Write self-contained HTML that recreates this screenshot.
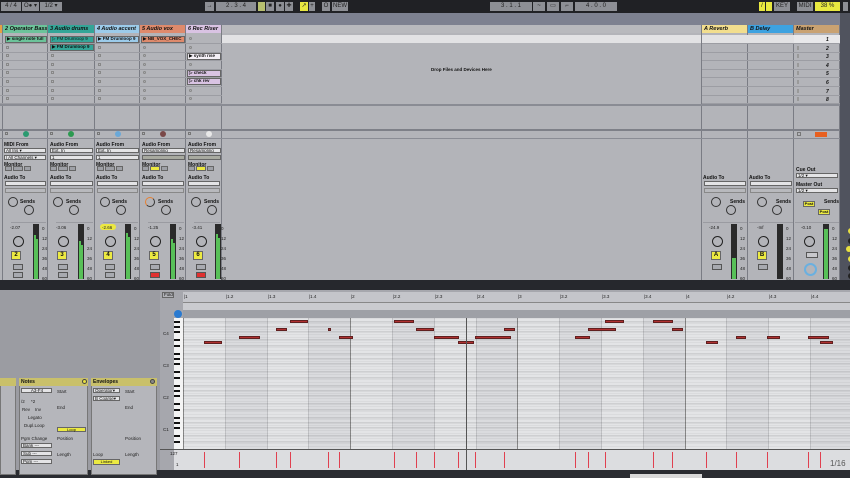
<!DOCTYPE html>
<html><head><meta charset="utf-8">
<style>
*{margin:0;padding:0;box-sizing:border-box}
body{width:850px;height:478px;overflow:hidden;background:#25272c;font-family:"Liberation Sans",sans-serif;font-size:5px;color:#111;position:relative}
.a{position:absolute}
.b{position:absolute;font-weight:bold}
.fld{position:absolute;background:#e4e4e6;border:1px solid #666;font-size:4.5px;line-height:4px;padding-left:1px;overflow:hidden;white-space:nowrap}
.tb{position:absolute;background:#8d8f95;color:#222;font-size:6px;line-height:9px;text-align:center;top:2px;height:9px}
.hd{position:absolute;top:25px;height:8px;font-style:italic;font-weight:bold;font-size:5.5px;line-height:8px;padding-left:2px;white-space:nowrap;overflow:hidden}
.yb{position:absolute;background:#ecea42;border:1px solid #666;font-weight:bold;font-size:6px;text-align:center;line-height:7px}
.sm{position:absolute;font-size:4.5px;color:#222}
</style></head><body>
<!-- top bar -->
<div class="a" style="left:0;top:0;width:850px;height:13px;background:#202125"></div>
<div class="tb" style="left:1px;width:20px">4 / 4</div>
<div class="tb" style="left:22px;width:17px">O● ▾</div>
<div class="tb" style="left:40px;width:22px">1/2 ▾</div>
<div class="tb" style="left:205px;width:9px">→</div>
<div class="tb" style="left:216px;width:40px">2 . 3 . 4</div>
<div class="tb" style="left:258px;width:7px;background:#b8c070"></div>
<div class="tb" style="left:266px;width:8px">■</div>
<div class="tb" style="left:276px;width:8px">●</div>
<div class="tb" style="left:285px;width:8px">✚</div>
<div class="tb" style="left:300px;width:8px;background:#e8e840">↗</div>
<div class="tb" style="left:309px;width:6px">+</div>
<div class="tb" style="left:322px;width:8px">O</div>
<div class="tb" style="left:332px;width:16px">NEW</div>
<div class="tb" style="left:490px;width:42px">3 . 1 . 1</div>
<div class="tb" style="left:533px;width:12px">~</div>
<div class="tb" style="left:547px;width:12px">▭</div>
<div class="tb" style="left:561px;width:12px">⌐</div>
<div class="tb" style="left:575px;width:42px">4 . 0 . 0</div>
<div class="tb" style="left:759px;width:6px;background:#e8e840">/</div>
<div class="tb" style="left:766px;width:6px;background:#e8e840"></div>
<div class="tb" style="left:774px;width:16px">KEY</div>
<div class="tb" style="left:797px;width:16px">MIDI</div>
<div class="tb" style="left:815px;width:25px;background:#e8e840">38 %</div>
<div class="tb" style="left:843px;width:5px"></div>
<div class="a" style="left:0;top:13px;width:850px;height:12px;background:#7d8190"></div>
<!-- session -->
<div class="a" style="left:0;top:25px;width:840px;height:255px;background:#b3b4b9"></div>
<div class="a" style="left:840px;top:13px;width:10px;height:267px;background:#50535e"></div>
<div class="a" style="left:222px;top:35px;width:480px;height:8px;background:#e2e2e4"></div>
<div class="b" style="left:431px;top:67px;font-size:4.5px">Drop Files and Devices Here</div>
<div class="a" style="left:222px;top:25px;width:480px;height:8px;background:#b8b9bd"></div>
<div class="hd" style="left:0;width:3px;background:#e8a040"></div>
<div class="hd" style="left:3px;width:45px;background:#6cc39a">2 Operator Bass</div>
<div class="hd" style="left:48px;width:47px;background:#33a597">3 Audio drums</div>
<div class="hd" style="left:95px;width:45px;background:#9ccbea">4 Audio accent</div>
<div class="hd" style="left:140px;width:46px;background:#de8a6c">5 Audio vox</div>
<div class="hd" style="left:186px;width:36px;background:#d9c3e3">6 Rec Riser</div>
<div class="hd" style="left:702px;width:45px;background:#f2de8e">A Reverb</div>
<div class="hd" style="left:748px;width:45px;background:#3da2e0">B Delay</div>
<div class="hd" style="left:794px;width:46px;background:#c9a272">Master</div>
<div id="S"></div>
<!-- clips -->
<div class="fld" style="left:5px;top:36px;width:42px;height:7px;background:#6cc39a;font-weight:bold">▶ single note full</div>
<div class="fld" style="left:50px;top:36px;width:44px;height:7px;background:#33a597">▷ FM Drumloop 9</div>
<div class="fld" style="left:50px;top:44px;width:44px;height:7px;background:#33a597;font-weight:bold">▶ FM Drumloop 9</div>
<div class="fld" style="left:96px;top:36px;width:43px;height:7px;background:#9ccbea;font-weight:bold">▶ FM Drumloop 9</div>
<div class="fld" style="left:141px;top:36px;width:44px;height:7px;background:#de8a6c;font-weight:bold">▶ NB_VOX_CHEC</div>
<div class="fld" style="left:187px;top:53px;width:34px;height:7px;background:#f4f0f6;font-weight:bold">▶ synth rise</div>
<div class="fld" style="left:187px;top:70px;width:34px;height:7px;background:#d9c3e3;font-weight:bold">▷ check</div>
<div class="fld" style="left:187px;top:78px;width:34px;height:7px;background:#d9c3e3;font-weight:bold">▷ chk rev</div>
<!-- I/O text -->
<div class="b" style="left:4px;top:142px">MIDI From</div><div class="fld" style="left:4px;top:148px;width:42px;height:5px">All Ins ▾</div><div class="fld" style="left:4px;top:155px;width:42px;height:5px">| All Channels ▾</div>
<div class="b" style="left:50px;top:142px">Audio From</div><div class="fld" style="left:50px;top:148px;width:43px;height:5px">Ext. In</div><div class="fld" style="left:50px;top:155px;width:43px;height:5px">1</div>
<div class="b" style="left:96px;top:142px">Audio From</div><div class="fld" style="left:96px;top:148px;width:43px;height:5px">Ext. In</div><div class="fld" style="left:96px;top:155px;width:43px;height:5px">1</div>
<div class="b" style="left:142px;top:142px">Audio From</div><div class="fld" style="left:142px;top:148px;width:43px;height:5px">Resampling</div><div class="fld" style="left:142px;top:155px;width:43px;height:5px;background:#a8aaa0"></div>
<div class="b" style="left:188px;top:142px">Audio From</div><div class="fld" style="left:188px;top:148px;width:33px;height:5px">Resampling</div><div class="fld" style="left:188px;top:155px;width:33px;height:5px;background:#a8aaa0"></div>
<div class="b" style="left:4px;top:162px">Monitor</div><div class="b" style="left:50px;top:162px">Monitor</div><div class="b" style="left:96px;top:162px">Monitor</div><div class="b" style="left:142px;top:162px">Monitor</div><div class="b" style="left:188px;top:162px">Monitor</div>
<div class="b" style="left:4px;top:175px">Audio To</div><div class="b" style="left:50px;top:175px">Audio To</div><div class="b" style="left:96px;top:175px">Audio To</div><div class="b" style="left:142px;top:175px">Audio To</div><div class="b" style="left:188px;top:175px">Audio To</div>
<div class="b" style="left:703px;top:175px">Audio To</div><div class="b" style="left:749px;top:175px">Audio To</div>
<div class="b" style="left:796px;top:167px">Cue Out</div><div class="fld" style="left:796px;top:173px;width:42px;height:5px">1/2 ▾</div>
<div class="b" style="left:796px;top:182px">Master Out</div><div class="fld" style="left:796px;top:188px;width:42px;height:5px">1/2 ▾</div>
<div class="yb" style="left:803px;top:201px;width:12px;height:6px;font-size:4px;line-height:4px">Post</div>
<div class="yb" style="left:818px;top:209px;width:12px;height:6px;font-size:4px;line-height:4px">Post</div>
<!-- mixer texts -->
<div class="sm" style="left:10px;top:225px">-2.07</div><div class="sm" style="left:56px;top:225px">-3.06</div>
<div class="a" style="left:100px;top:224px;width:16px;height:6px;background:#ece840;border-radius:3px"></div><div class="sm" style="left:102px;top:225px">-2.66</div>
<div class="sm" style="left:148px;top:225px">-1.25</div><div class="sm" style="left:192px;top:225px">-3.41</div>
<div class="sm" style="left:709px;top:225px">-24.9</div><div class="sm" style="left:757px;top:225px">-Inf</div><div class="sm" style="left:801px;top:225px">-0.10</div>
<div class="yb" style="left:11px;top:251px;width:10px;height:9px">2</div>
<div class="yb" style="left:57px;top:251px;width:10px;height:9px">3</div>
<div class="yb" style="left:103px;top:251px;width:10px;height:9px">4</div>
<div class="yb" style="left:149px;top:251px;width:10px;height:9px">5</div>
<div class="yb" style="left:193px;top:251px;width:10px;height:9px">6</div>
<div class="yb" style="left:711px;top:251px;width:10px;height:9px">A</div>
<div class="yb" style="left:757px;top:251px;width:10px;height:9px">B</div>
<div class="b" style="left:730px;top:199px">Sends</div><div class="b" style="left:776px;top:199px">Sends</div><div class="b" style="left:824px;top:199px">Sends</div>
<div class="b" style="left:20px;top:199px">Sends</div><div class="b" style="left:66px;top:199px">Sends</div><div class="b" style="left:112px;top:199px">Sends</div><div class="b" style="left:158px;top:199px">Sends</div><div class="b" style="left:204px;top:199px">Sends</div>
<!-- bottom -->
<div class="a" style="left:0;top:280px;width:850px;height:10px;background:#26282d"></div>
<div class="a" style="left:0;top:290px;width:160px;height:180px;background:#9b9ca2"></div>
<div class="a" style="left:160px;top:290px;width:690px;height:180px;background:#a6a7ad"></div>
<div class="a" style="left:0;top:470px;width:850px;height:8px;background:#2a2c31"></div>
<div class="a" style="left:630px;top:474px;width:72px;height:4px;background:#d8d8d8"></div>
<div id="P"></div>
<div class="fld" style="left:162px;top:292px;width:12px;height:6px;background:#b0b1b6;font-size:4.5px">Fold</div>
<div class="sm" style="left:163px;top:331px">C4</div><div class="sm" style="left:163px;top:363px">C3</div><div class="sm" style="left:163px;top:395px">C2</div><div class="sm" style="left:163px;top:427px">C1</div>
<div class="sm" style="left:170px;top:451px">127</div><div class="sm" style="left:176px;top:462px">1</div>
<div class="b" style="left:830px;top:459px;font-size:8px;color:#555;font-weight:normal">1/16</div>
<!-- clip panels -->
<div class="a" style="left:0;top:378px;width:16px;height:97px;background:#b5b6bb;border:1px solid #777"></div>
<div class="a" style="left:0;top:378px;width:16px;height:8px;background:#c9c06a"></div>
<div class="a" style="left:19px;top:378px;width:69px;height:97px;background:#b5b6bb;border:1px solid #777"></div>
<div class="a" style="left:19px;top:378px;width:69px;height:8px;background:#c9c06a"></div>
<div class="b" style="left:21px;top:379px">Notes</div>
<div class="a" style="left:82px;top:379px;width:5px;height:5px;border-radius:50%;background:#e8e040;border:1px solid #444"></div>
<div class="a" style="left:91px;top:378px;width:66px;height:97px;background:#b5b6bb;border:1px solid #777"></div>
<div class="a" style="left:91px;top:378px;width:66px;height:8px;background:#c9c06a"></div>
<div class="b" style="left:93px;top:379px">Envelopes</div>
<div class="a" style="left:150px;top:379px;width:5px;height:5px;border-radius:50%;background:#888;border:1px solid #444"></div>
<div class="fld" style="left:21px;top:388px;width:31px;height:5px;text-align:center">A3-F4</div>
<div class="sm" style="left:57px;top:389px">Start</div><div class="sm" style="left:57px;top:405px">End</div>
<div class="yb" style="left:57px;top:427px;width:29px;height:5px;font-size:4px;line-height:3px;font-weight:normal">Loop</div>
<div class="sm" style="left:57px;top:436px">Position</div><div class="sm" style="left:57px;top:452px">Length</div>
<div class="sm" style="left:21px;top:399px">/2 &nbsp;&nbsp;&nbsp; *2</div>
<div class="sm" style="left:22px;top:407px">Rev &nbsp;&nbsp; Inv</div>
<div class="sm" style="left:28px;top:415px">Legato</div><div class="sm" style="left:24px;top:423px">Dupl.Loop</div>
<div class="sm" style="left:21px;top:436px">Pgm Change</div>
<div class="fld" style="left:21px;top:443px;width:31px;height:5px">Bank ---</div>
<div class="fld" style="left:21px;top:451px;width:31px;height:5px">Sub ---</div>
<div class="fld" style="left:21px;top:459px;width:31px;height:5px">Pgm ---</div>
<div class="fld" style="left:93px;top:388px;width:27px;height:5px">Operator▾</div>
<div class="fld" style="left:93px;top:396px;width:27px;height:5px">B Coarse▾</div>
<div class="sm" style="left:125px;top:389px">Start</div><div class="sm" style="left:125px;top:405px">End</div>
<div class="sm" style="left:125px;top:436px">Position</div><div class="sm" style="left:125px;top:452px">Length</div>
<div class="sm" style="left:93px;top:452px">Loop</div>
<div class="yb" style="left:93px;top:459px;width:27px;height:6px;font-size:4px;line-height:4px;font-weight:normal">Linked</div>
<script>
var h='';function r(x,y,w,hh,c,ex){h+='<div class="a" style="left:'+x+'px;top:'+y+'px;width:'+w+'px;height:'+hh+'px;background:'+c+';'+(ex||'')+'"></div>';}
var tx=[3,48,95,140,186],tw=[45,47,45,46,36];
[3,48,95,140,186,222,702,748,794,840].forEach(function(x){r(x-1,25,1,255,'#7a7c84');});
r(0,104,840,2,'#8a8c94');r(0,129,840,2,'#7e8088');r(0,138,840,1,'#8a8c94');
for(var i=0;i<8;i++){var y=35+i*8.6;r(0,Math.round(y+8),222,1,'#9c9da3');r(702,Math.round(y+8),138,1,'#9c9da3');
 for(var t=0;t<5;t++){r(tx[t]+3,Math.round(y+2),3,3,'transparent','border:1px solid #888;'+(t>=3?'border-radius:50%':''));}
 r(797,Math.round(y+2),3,4,'transparent','border-left:2px solid #999');}
r(702,35,92,8,'#e2e2e4');r(794,35,46,8,'#e8e8ea');
for(var t=0;t<5;t++){var x=tx[t],w=tw[t];
 r(x+2,132,3,3,'transparent','border:1px solid #777');
 r(x+20,131,6,6,['#2a9a70','#2c9a50','#6aa8d8','#7a4848','#e8e8e8'][t],'border-radius:50%');
 r(x+2,166,7,5,'#9ea0a6','border:1px solid #666');r(x+10,166,10,5,(t>=3?'#ece840':'#9ea0a6'),'border:1px solid #666');r(x+21,166,7,5,'#9ea0a6','border:1px solid #666');
 r(x+2,181,w-4,5,'#e4e4e6','border:1px solid #666');r(x+2,188,w-4,5,'#b8b9bd','border:1px solid #888');
 r(x+5,197,10,10,'transparent','border:1.5px solid #333;border-radius:50%;'+(t==3?'border-color:#e88030 #333 #333 #e88030':''));
 r(x+21,205,10,10,'transparent','border:1.5px solid #333;border-radius:50%');
 r(x+10,236,11,11,'transparent','border:1.5px solid #222;border-radius:50%');
 r(x+10,264,10,6,'#a8aab0','border:1px solid #555');r(x+10,272,10,6,(t>=3?'#e03030':'#a8aab0'),'border:1px solid #555');
 var mx=x+(t==4?29:30);r(mx,224,6,55,'#2a2a2a');var lv=[44,38,46,40,45][t];r(mx+1,279-lv,2,lv,'#58c058');r(mx+3,279-lv+4,2,lv-4,'#58c058');
 r(x+8,222,w-10,1,'#9a9ba1');}
for(var t=0;t<5;t++){var x=tx[t];['0','12','24','36','48','60'].forEach(function(s,k){h+='<div class="sm" style="left:'+(x+(t==4?35:39))+'px;top:'+(226+k*10)+'px">'+s+'</div>';});}
[702,748,794].forEach(function(x,k){r(x+2,181,42,5,k<2?'#e4e4e6':'transparent',k<2?'border:1px solid #666':'');if(k<2){r(x+2,188,42,5,'#b8b9bd','border:1px solid #888');
 r(x+9,197,10,10,'transparent','border:1.5px solid #333;border-radius:50%');r(x+24,205,10,10,'transparent','border:1.5px solid #333;border-radius:50%');r(x+10,264,10,6,'#a8aab0','border:1px solid #555');}
 r(x+10,236,11,11,'transparent','border:1.5px solid #222;border-radius:50%');
 r(x+29,224,6,55,'#2a2a2a');if(k==0)r(x+30,258,4,21,'#58c058');if(k==2){r(x+30,229,4,50,'#58c058');r(x+12,252,12,6,'#c8c8cc','border:1px solid #555');r(x+10,263,13,13,'transparent','border:2px solid #6ab0e0;border-radius:50%');}
 ['0','12','24','36','48','60'].forEach(function(s,j){h+='<div class="sm" style="left:'+(x+38)+'px;top:'+(226+j*10)+'px">'+s+'</div>';});
 r(x+1,222,44,1,'#9a9ba1');});
r(815,132,12,5,'#e86020');r(797,132,4,4,'transparent','border:1px solid #777');
for(var i=0;i<8;i++)h+='<div class="b" style="left:826px;top:'+Math.round(37+i*8.6)+'px;font-style:italic">'+(i+1)+'</div>';
[[848,228,'#e8e040'],[848,238,'#222'],[846,246,'#e8e040'],[848,256,'#e8e040'],[848,265,'#222'],[848,273,'#222']].forEach(function(d){r(d[0],d[1],6,6,d[2],'border-radius:50%');});
document.getElementById('S').outerHTML=h;
h='';
r(183,292,667,10,'#c4c5ca');r(183,302,667,8,'#cacbcf','border-top:1px solid #888');r(183,310,667,8,'#9ea0a6');
r(174,310,8,8,'#2a7ad0','border-radius:50%');
r(174,318,676,132,'#e3e4e6');
var bw=41.8;for(var b=0;b<16;b++){var x=183+b*bw;if(b%2)r(Math.round(x),318,Math.round(bw),132,'#dadbde');r(Math.round(x),318,Math.round(bw),132,'transparent','border-left:1px solid '+(b%4==0?'#888':'#c0c1c4'));
 h+='<div class="sm" style="left:'+Math.round(x+1)+'px;top:294px;font-size:4.5px">|'+(Math.floor(b/4)+1)+(b%4?'.'+(b%4+1):'')+'</div>';}
for(var i=0;i<50;i++){var y=318+i*2.67;var n=i%12;if([1,3,5,8,10].indexOf(n)>=0)r(183,Math.round(y),667,2,'rgba(0,0,0,0.05)');r(183,Math.round(y),667,1,'rgba(0,0,0,0.04)');}
r(174,318,9,132,'#f4f4f4');for(var i=0;i<50;i++){var n=i%12;if([1,3,5,8,10].indexOf(n)>=0)r(174,Math.round(318+i*2.67),6,2,'#111');}
r(160,449,690,1,'#555');r(174,450,676,20,'#dcdde0');
var N=[[204,222,341],[239,260,336],[276,287,328],[290,308,320],[328,331,328],[339,353,336],[394,414,320],[416,434,328],[434,459,336],[458,474,341],[475,511,336],[504,515,328],[575,590,336],[588,616,328],[605,624,320],[653,673,320],[672,683,328],[706,718,341],[736,746,336],[767,780,336],[808,829,336],[820,833,341]];
N.forEach(function(n){r(n[0],n[2],n[1]-n[0],3,'#b03030','border:0.5px solid #602020');r(n[0],452,1,16,'#e04050');});
r(466,318,1,152,'#555');
document.getElementById('P').outerHTML=h;
</script>
</body></html>
